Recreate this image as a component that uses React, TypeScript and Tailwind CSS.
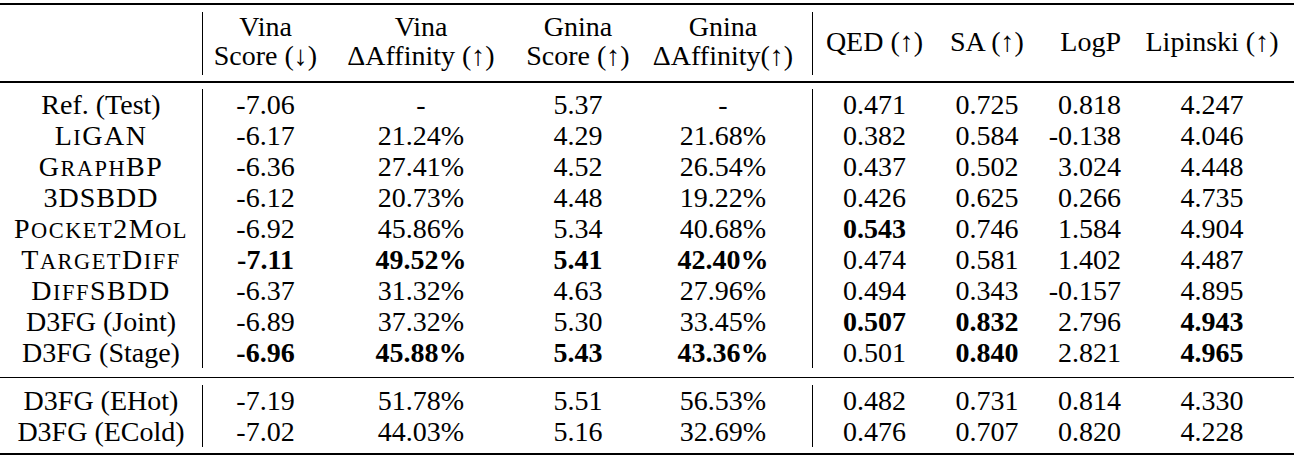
type Row = { name: string; sc?: boolean; cells: string[] };

const grid =
  "grid grid-cols-[202px_126px_186px_128px_170px_124px_102px_92px_164px]";

const main: Row[] = [
  { name: "Ref. (Test)", cells: ["-7.06", "-", "5.37", "-", "0.471", "0.725", "0.818", "4.247"] },
  { name: "LiGAN", sc: true, cells: ["-6.17", "21.24%", "4.29", "21.68%", "0.382", "0.584", "-0.138", "4.046"] },
  { name: "GraphBP", sc: true, cells: ["-6.36", "27.41%", "4.52", "26.54%", "0.437", "0.502", "3.024", "4.448"] },
  { name: "3DSBDD", sc: true, cells: ["-6.12", "20.73%", "4.48", "19.22%", "0.426", "0.625", "0.266", "4.735"] },
  { name: "Pocket2Mol", sc: true, cells: ["-6.92", "45.86%", "5.34", "40.68%", "*0.543", "0.746", "1.584", "4.904"] },
  { name: "TargetDiff", sc: true, cells: ["*-7.11", "*49.52%", "*5.41", "*42.40%", "0.474", "0.581", "1.402", "4.487"] },
  { name: "DiffSBDD", sc: true, cells: ["-6.37", "31.32%", "4.63", "27.96%", "0.494", "0.343", "-0.157", "4.895"] },
  { name: "D3FG (Joint)", cells: ["-6.89", "37.32%", "5.30", "33.45%", "*0.507", "*0.832", "2.796", "*4.943"] },
  { name: "D3FG (Stage)", cells: ["*-6.96", "*45.88%", "*5.43", "*43.36%", "0.501", "*0.840", "2.821", "*4.965"] },
];

const ext: Row[] = [
  { name: "D3FG (EHot)", cells: ["-7.19", "51.78%", "5.51", "56.53%", "0.482", "0.731", "0.814", "4.330"] },
  { name: "D3FG (ECold)", cells: ["-7.02", "44.03%", "5.16", "32.69%", "0.476", "0.707", "0.820", "4.228"] },
];

// per-column alignment, index 0 = first value column
const colClass = [
  "text-center border-l border-black",
  "text-center",
  "text-center",
  "text-center pr-2",
  "text-center border-l border-black",
  "text-center",
  "text-right pr-[9px]",
  "text-center",
];

// fake small caps: lowercase runs become smaller uppercase letters
function SmallCaps({ text }: { text: string }) {
  const parts = text.match(/[a-z]+|[^a-z]+/g) ?? [];
  return (
    <span className={text === "3DSBDD" ? "tracking-[1px]" : "tracking-[1.5px]"}>
      {parts.map((p, i) =>
        /[a-z]/.test(p) ? (
          <span key={i} className="text-[0.8em] uppercase">
            {p}
          </span>
        ) : (
          <span key={i}>{p}</span>
        )
      )}
    </span>
  );
}

function Cell({ value, i }: { value: string; i: number }) {
  const bold = value.startsWith("*");
  const text = bold ? value.slice(1) : value;
  return (
    <div className={`h-[31px] ${colClass[i]} ${bold ? "font-bold" : ""}`}>{text}</div>
  );
}

function Body({ rows }: { rows: Row[] }) {
  return (
    <div className={grid}>
      {rows.map((r) => (
        <div key={r.name} className="contents">
          <div className="h-[31px] text-center">
            {r.sc ? <SmallCaps text={r.name} /> : r.name}
          </div>
          {r.cells.map((c, i) => (
            <Cell key={i} value={c} i={i} />
          ))}
        </div>
      ))}
    </div>
  );
}

export default function App() {
  return (
    <div
      className="w-[1297px] h-[457px] bg-white text-black pt-[3px] text-[28px] leading-[31px]"
      style={{ fontFamily: '"Liberation Serif", "Times New Roman", serif' }}
    >
      <div className="w-[1294px]">
        <div className="h-[2px] bg-black" />

        <div className={`${grid} mt-[7px] leading-[29px]`}>
          <div />
          <div className="border-l border-black text-center pb-[5px]">
            <div>Vina</div>
            <div>Score (↓)</div>
          </div>
          <div className="text-center pb-[5px]">
            <div>Vina</div>
            <div>ΔAffinity (↑)</div>
          </div>
          <div className="text-center pb-[5px]">
            <div>Gnina</div>
            <div>Score (↑)</div>
          </div>
          <div className="text-center pr-2 pb-[5px]">
            <div>Gnina</div>
            <div>ΔAffinity(↑)</div>
          </div>
          <div className="border-l border-black flex items-center justify-center pb-[5px]">
            QED (↑)
          </div>
          <div className="flex items-center justify-center pb-[5px]">SA (↑)</div>
          <div className="flex items-center justify-end pr-[9px] pb-[5px]">LogP</div>
          <div className="flex items-center justify-center pb-[5px]">Lipinski (↑)</div>
        </div>

        <div className="mt-[6px] h-[1.5px] bg-black" />
        <div className="mt-[6px]">
          <Body rows={main} />
        </div>
        <div className="mt-[9px] h-[1.5px] bg-black" />
        <div className="mt-[7px]">
          <Body rows={ext} />
        </div>
        <div className="mt-[6px] h-[2px] bg-black" />
      </div>
    </div>
  );
}
